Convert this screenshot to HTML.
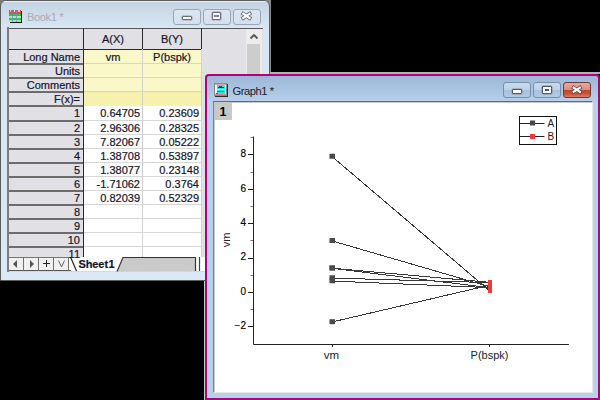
<!DOCTYPE html>
<html><head><meta charset="utf-8">
<style>
*{margin:0;padding:0;box-sizing:border-box}
html,body{width:600px;height:400px;overflow:hidden;background:#000;font-family:"Liberation Sans",sans-serif;position:relative}
div{position:absolute}
.ttl{font-size:11.2px;letter-spacing:-0.45px;white-space:nowrap;line-height:13px}
.wbtn{height:16px;width:28px;border:1px solid #8a98ae;border-radius:3px}
.t{font-size:11px;color:#14142a;line-height:14px;white-space:nowrap;-webkit-text-stroke:0.2px #14142a}
.r{text-align:right}
.c{text-align:center}
</style></head><body>

<div style="left:0;top:0;width:6px;height:6px;background:#7c7c7c"></div>
<div style="left:264px;top:0;width:7px;height:6px;background:#8a8a8a"></div>
<div style="left:270px;top:3px;width:1px;height:278px;background:#8a8a8a"></div>
<div style="left:0;top:0;width:270px;height:281px;border:1px solid #5c5c5c;border-radius:6px 6px 0 0;background:linear-gradient(#c4d3e3 0px,#cddcea 12px,#d8e6f3 27px,#dbe8f5 100%);overflow:hidden">
<div style="left:0;top:0;width:270px;height:1px;background:#e9eff6"></div>
</div>
<svg style="position:absolute;left:0;top:0" width="30" height="30" shape-rendering="crispEdges"><rect x="10" y="11" width="12" height="12" fill="#111"/><rect x="9" y="10" width="12" height="12" fill="#50e070"/><rect x="9" y="10" width="12" height="3" fill="#f04848"/><rect x="10" y="10" width="1" height="2" fill="#ffb0b0"/><rect x="14" y="10" width="1" height="2" fill="#ffffff"/><rect x="18" y="10" width="2" height="2" fill="#ffc0c0"/><rect x="9" y="13" width="12" height="1" fill="#6a6ad0"/><rect x="9" y="14" width="12" height="1" fill="#10dd30"/><rect x="9" y="15" width="12" height="1" fill="#7a80d0"/><rect x="9" y="16" width="12" height="2" fill="#a0f0a8"/><rect x="9" y="18" width="12" height="2" fill="#30c850"/><rect x="9" y="20" width="12" height="2" fill="#90f098"/><rect x="12" y="10" width="1" height="12" fill="#8080e0" fill-opacity="0.65"/><rect x="16" y="10" width="1" height="12" fill="#8080e0" fill-opacity="0.65"/></svg>
<div class="ttl" style="left:27px;top:11px;color:#a9abb2">Book1 *</div>
<div class="wbtn" style="left:173px;top:9px;background:linear-gradient(#dce6f1,#d3e0ed);border-color:#98a6ba"></div>
<div class="wbtn" style="left:203px;top:9px;background:linear-gradient(#dce6f1,#d3e0ed);border-color:#98a6ba"></div>
<div class="wbtn" style="left:233px;top:9px;background:linear-gradient(#dce6f1,#d3e0ed);border-color:#98a6ba"></div>
<div style="left:182px;top:16px;width:10px;height:4px;background:#fff;border:1px solid #6a6e78;border-radius:1px;box-shadow:0 0 0 0.5px #9aa0aa"></div>
<div style="left:212px;top:12px;width:9px;height:8px;background:#fff;border:1px solid #6a6e78;border-radius:1px;box-shadow:0 0 0 0.5px #9aa0aa"><div style="left:1px;top:2px;width:5px;height:2px;background:#7a8090"></div></div>
<svg style="position:absolute;left:0;top:0" width="600" height="400"><path d="M243.20000000000002 13.7 L249.6 18.1 M249.6 13.7 L243.20000000000002 18.1" stroke="#6a6e78" stroke-width="3.8" stroke-linecap="square" fill="none"/><path d="M243.20000000000002 13.7 L249.6 18.1 M249.6 13.7 L243.20000000000002 18.1" stroke="#fff" stroke-width="2.1" stroke-linecap="square" fill="none"/></svg>
<div style="left:7px;top:27px;width:256px;height:245px;background:#e1e0e5;overflow:hidden">
<div style="left:0;top:0;width:256px;height:1px;background:#dce9f5"></div>
<div style="left:0;top:1px;width:256px;height:1px;background:#555"></div>
<div style="left:0;top:0;width:2px;height:245px;background:#7c7c7c"></div>
<div style="left:77px;top:23px;width:118px;height:41px;background:#faf7c9;"></div>
<div style="left:77px;top:65px;width:118px;height:13px;background:#f6f1ad;"></div>
<div style="left:77px;top:79px;width:118px;height:151px;background:#ffffff;"></div>
<div style="left:2px;top:36px;width:74px;height:2px;background:#6c6c6c;"></div>
<div style="left:77px;top:36px;width:118px;height:1px;background:#d6d6d6;"></div>
<div style="left:2px;top:50px;width:74px;height:2px;background:#6c6c6c;"></div>
<div style="left:77px;top:50px;width:118px;height:1px;background:#d6d6d6;"></div>
<div style="left:2px;top:64px;width:74px;height:2px;background:#6c6c6c;"></div>
<div style="left:77px;top:64px;width:118px;height:1px;background:#d6d6d6;"></div>
<div style="left:2px;top:78px;width:74px;height:2px;background:#6c6c6c;"></div>
<div style="left:77px;top:78px;width:118px;height:1px;background:#ececec;"></div>
<div style="left:2px;top:93px;width:74px;height:2px;background:#6c6c6c;"></div>
<div style="left:77px;top:93px;width:118px;height:1px;background:#d6d6d6;"></div>
<div style="left:2px;top:107px;width:74px;height:2px;background:#6c6c6c;"></div>
<div style="left:77px;top:107px;width:118px;height:1px;background:#d6d6d6;"></div>
<div style="left:2px;top:121px;width:74px;height:2px;background:#6c6c6c;"></div>
<div style="left:77px;top:121px;width:118px;height:1px;background:#d6d6d6;"></div>
<div style="left:2px;top:135px;width:74px;height:2px;background:#6c6c6c;"></div>
<div style="left:77px;top:135px;width:118px;height:1px;background:#d6d6d6;"></div>
<div style="left:2px;top:149px;width:74px;height:2px;background:#6c6c6c;"></div>
<div style="left:77px;top:149px;width:118px;height:1px;background:#d6d6d6;"></div>
<div style="left:2px;top:163px;width:74px;height:2px;background:#6c6c6c;"></div>
<div style="left:77px;top:163px;width:118px;height:1px;background:#d6d6d6;"></div>
<div style="left:2px;top:177px;width:74px;height:2px;background:#6c6c6c;"></div>
<div style="left:77px;top:177px;width:118px;height:1px;background:#d6d6d6;"></div>
<div style="left:2px;top:191px;width:74px;height:2px;background:#6c6c6c;"></div>
<div style="left:77px;top:191px;width:118px;height:1px;background:#d6d6d6;"></div>
<div style="left:2px;top:205px;width:74px;height:2px;background:#6c6c6c;"></div>
<div style="left:77px;top:205px;width:118px;height:1px;background:#d6d6d6;"></div>
<div style="left:2px;top:219px;width:74px;height:2px;background:#6c6c6c;"></div>
<div style="left:77px;top:219px;width:118px;height:1px;background:#d6d6d6;"></div>
<div style="left:2px;top:22px;width:193px;height:1px;background:#2a2a2a;"></div>
<div style="left:76px;top:1px;width:1px;height:229px;background:#2a2a2a;"></div>
<div style="left:135px;top:1px;width:1px;height:21px;background:#2a2a2a;"></div>
<div style="left:194px;top:1px;width:1px;height:21px;background:#2a2a2a;"></div>
<div style="left:135px;top:22px;width:1px;height:208px;background:#d0d0d0;"></div>
<div style="left:194px;top:22px;width:1px;height:208px;background:#d0d0d0;"></div>
<div style="left:239px;top:2px;width:16px;height:228px;background:#ececec;"></div>
<div style="left:240px;top:17px;width:13px;height:213px;background:#cdcdcd;"></div>
<svg style="position:absolute;left:0;top:0" width="270" height="100"><path d="M243.5 11.5 L247 8 L250.5 11.5" stroke="#555" stroke-width="1.8" fill="none"/></svg>
<div style="left:2px;top:230px;width:253px;height:15px;background:#ffffff;"></div>
<div style="left:2px;top:230px;width:62px;height:1px;background:#777;"></div>
<div style="left:2px;top:243px;width:62px;height:1px;background:#555;"></div>
<div style="left:2px;top:244px;width:253px;height:1px;background:#d8d8d8;"></div>
<div style="left:2px;top:231px;width:14px;height:12px;background:#f0f0f0;"></div>
<div style="left:16px;top:230px;width:1px;height:14px;background:#707070;"></div>
<div style="left:17px;top:231px;width:14px;height:12px;background:#f0f0f0;"></div>
<div style="left:31px;top:230px;width:1px;height:14px;background:#707070;"></div>
<div style="left:32px;top:231px;width:14px;height:12px;background:#f0f0f0;"></div>
<div style="left:46px;top:230px;width:1px;height:14px;background:#707070;"></div>
<div style="left:47px;top:231px;width:14px;height:12px;background:#f0f0f0;"></div>
<div style="left:61px;top:230px;width:1px;height:14px;background:#707070;"></div>
</div>
<div class="t c" style="left:84px;top:32px;width:58px;">A(X)</div>
<div class="t c" style="left:143px;top:32px;width:58px;">B(Y)</div>
<div class="t r" style="left:9px;top:49.5px;width:71px;">Long Name</div>
<div class="t r" style="left:9px;top:64px;width:71px;">Units</div>
<div class="t r" style="left:9px;top:78px;width:71px;">Comments</div>
<div class="t r" style="left:9px;top:92px;width:71px;">F(x)=</div>
<div class="t r" style="left:9px;top:106px;width:71px;">1</div>
<div class="t r" style="left:9px;top:121px;width:71px;">2</div>
<div class="t r" style="left:9px;top:135px;width:71px;">3</div>
<div class="t r" style="left:9px;top:149px;width:71px;">4</div>
<div class="t r" style="left:9px;top:163px;width:71px;">5</div>
<div class="t r" style="left:9px;top:177px;width:71px;">6</div>
<div class="t r" style="left:9px;top:191px;width:71px;">7</div>
<div class="t r" style="left:9px;top:205px;width:71px;">8</div>
<div class="t r" style="left:9px;top:219px;width:71px;">9</div>
<div class="t r" style="left:9px;top:233px;width:71px;">10</div>
<div class="t r" style="left:9px;top:247px;width:71px;">11</div>
<div class="t c" style="left:84px;top:49.5px;width:58px;">vm</div>
<div class="t c" style="left:143px;top:49.5px;width:58px;">P(bspk)</div>
<div class="t r" style="left:84px;top:106px;width:56px;">0.64705</div>
<div class="t r" style="left:143px;top:106px;width:56px;">0.23609</div>
<div class="t r" style="left:84px;top:121px;width:56px;">2.96306</div>
<div class="t r" style="left:143px;top:121px;width:56px;">0.28325</div>
<div class="t r" style="left:84px;top:135px;width:56px;">7.82067</div>
<div class="t r" style="left:143px;top:135px;width:56px;">0.05222</div>
<div class="t r" style="left:84px;top:149px;width:56px;">1.38708</div>
<div class="t r" style="left:143px;top:149px;width:56px;">0.53897</div>
<div class="t r" style="left:84px;top:163px;width:56px;">1.38077</div>
<div class="t r" style="left:143px;top:163px;width:56px;">0.23148</div>
<div class="t r" style="left:84px;top:177px;width:56px;">-1.71062</div>
<div class="t r" style="left:143px;top:177px;width:56px;">0.3764</div>
<div class="t r" style="left:84px;top:191px;width:56px;">0.82039</div>
<div class="t r" style="left:143px;top:191px;width:56px;">0.52329</div>
<div style="left:13px;top:260px;width:0;height:0;border-top:4px solid transparent;border-bottom:4px solid transparent;border-right:4px solid #555"></div>
<div style="left:30px;top:260px;width:0;height:0;border-top:4px solid transparent;border-bottom:4px solid transparent;border-left:4px solid #555"></div>
<div style="left:43px;top:263px;width:7px;height:1px;background:#222"></div><div style="left:46px;top:260px;width:1px;height:7px;background:#222"></div>
<svg style="position:absolute;left:0;top:0" width="100" height="300"><path d="M58.5 260.5 L61.5 267 L64.5 260.5" stroke="#666" stroke-width="1" fill="none"/></svg>
<svg style="position:absolute;left:0;top:0" width="270" height="281"><path d="M70.5 257 L76.5 271" stroke="#222" stroke-width="1.2" fill="none"/><path d="M117 271.5 L123 257.5 L195.5 257.5 L195.5 271" stroke="#333" stroke-width="1.2" fill="#cacaca"/><path d="M199.5 257 L199.5 271" stroke="#444" stroke-width="1.2"/></svg>
<div class="t" style="left:78.5px;top:257px;font-weight:bold;font-size:11px;letter-spacing:-0.1px">Sheet</div>
<div class="t" style="left:108.5px;top:257px;font-weight:bold;font-size:11px">1</div>
<div style="left:270px;top:72px;width:330px;height:2px;background:#b4b4b4"></div>
<div style="left:204px;top:281px;width:1px;height:119px;background:#c4ccc8"></div>
<div style="left:205px;top:74px;width:395px;height:326px;background:#b4007e;border-radius:4px 4px 0 0"></div>
<div style="left:207px;top:76px;width:391px;height:322px;background:linear-gradient(#9cb8d6 0px,#a8c3e0 12px,#b8d0ea 26px,#b8d0ea 100%);border-radius:2px 2px 0 0"></div>
<svg style="position:absolute;left:0;top:0" width="240" height="100" shape-rendering="crispEdges"><rect x="215" y="84" width="13" height="13" fill="#2a2a2a"/><rect x="214" y="83" width="13" height="13" fill="#8a8a8a"/><rect x="215" y="84" width="11" height="11" fill="#f4f0f0"/><rect x="215" y="84" width="11" height="1" fill="#f0a0a0"/><rect x="215" y="94" width="11" height="1" fill="#f08080"/><rect x="217" y="85" width="8" height="9" fill="#22e8e8"/><rect x="217" y="89" width="8" height="1" fill="#d0f4f4"/><rect x="218" y="87" width="6" height="1" fill="#203040"/><rect x="219" y="86" width="3" height="1" fill="#405060"/><rect x="217" y="91" width="7" height="1" fill="#4060e0"/><rect x="216" y="93" width="2" height="1" fill="#e02020"/></svg>
<div class="ttl" style="left:232.5px;top:85px;color:#1a2030">Graph1 *</div>
<div class="wbtn" style="left:503px;top:82px;background:linear-gradient(#c8dbef 0,#bcd2ea 50%,#a7c1dd 51%,#b2cbe5 100%);border-color:#7b8ca8"></div>
<div class="wbtn" style="left:533px;top:82px;background:linear-gradient(#c8dbef 0,#bcd2ea 50%,#a7c1dd 51%,#b2cbe5 100%);border-color:#7b8ca8"></div>
<div class="wbtn" style="left:563px;top:82px;background:linear-gradient(#eaa898 0,#e0907e 46%,#c4472a 52%,#c85236 75%,#dc7c62 100%);border-color:#6a3a44"></div>
<div style="left:512px;top:89px;width:10px;height:5px;background:#fff;border:1px solid #4e5868;border-radius:1px;box-shadow:0 0 0 0.5px #8a90a0"></div>
<div style="left:542px;top:86px;width:10px;height:8px;background:#fff;border:1px solid #4e5868;border-radius:1px;box-shadow:0 0 0 0.5px #8a90a0"><div style="left:2px;top:2px;width:4px;height:2px;background:#4a5a78"></div></div>
<svg style="position:absolute;left:0;top:0" width="600" height="400"><path d="M573.6999999999999 87.7 L579.9 91.89999999999999 M579.9 87.7 L573.6999999999999 91.89999999999999" stroke="#5a4a50" stroke-width="3.8" stroke-linecap="square" fill="none"/><path d="M573.6999999999999 87.7 L579.9 91.89999999999999 M579.9 87.7 L573.6999999999999 91.89999999999999" stroke="#fff" stroke-width="2.1" stroke-linecap="square" fill="none"/></svg>
<div style="left:213px;top:101px;width:380px;height:292px;background:#fff;border-top:1px solid #6a6a6a;border-left:1px solid #808080;border-right:1px solid #e8e8e8;border-bottom:1px solid #e8e8e8"></div>
<div style="left:214px;top:102px;width:378px;height:1px;background:#c8c8c8"></div>
<div style="left:214px;top:102px;width:1px;height:290px;background:#c8c8c8"></div>
<div style="left:215px;top:103px;width:17px;height:17px;background:#c8c8c8"></div>
<div style="left:219.5px;top:105px;font-size:12.5px;font-weight:bold;color:#000">1</div>
<svg style="position:absolute;left:0;top:0" width="600" height="400" shape-rendering="auto"><path d="M253.5 136.5 V344.5 H569" stroke="#222" stroke-width="1" fill="none"/><path d="M248 326.5 H253" stroke="#222" stroke-width="1"/><path d="M250.5 309.5 H253" stroke="#777" stroke-width="1"/><path d="M248 292.5 H253" stroke="#222" stroke-width="1"/><path d="M250.5 275.5 H253" stroke="#777" stroke-width="1"/><path d="M248 258.5 H253" stroke="#222" stroke-width="1"/><path d="M250.5 240.5 H253" stroke="#777" stroke-width="1"/><path d="M248 223.5 H253" stroke="#222" stroke-width="1"/><path d="M250.5 206.5 H253" stroke="#777" stroke-width="1"/><path d="M248 189.5 H253" stroke="#222" stroke-width="1"/><path d="M250.5 172.5 H253" stroke="#777" stroke-width="1"/><path d="M248 154.5 H253" stroke="#222" stroke-width="1"/><path d="M250.5 137.5 H253" stroke="#777" stroke-width="1"/><path d="M332.5 345 V347 M489.5 345 V347" stroke="#222" stroke-width="1"/><path d="M332 281.07 L489.7 287.60" stroke="#383838" stroke-width="1" fill="none" shape-rendering="crispEdges"/><path d="M332 240.86 L489.7 286.78" stroke="#383838" stroke-width="1" fill="none" shape-rendering="crispEdges"/><path d="M332 156.53 L489.7 290.79" stroke="#383838" stroke-width="1" fill="none" shape-rendering="crispEdges"/><path d="M332 268.22 L489.7 282.34" stroke="#383838" stroke-width="1" fill="none" shape-rendering="crispEdges"/><path d="M332 268.33 L489.7 287.68" stroke="#383838" stroke-width="1" fill="none" shape-rendering="crispEdges"/><path d="M332 322.00 L489.7 285.17" stroke="#383838" stroke-width="1" fill="none" shape-rendering="crispEdges"/><path d="M332 278.06 L489.7 282.62" stroke="#383838" stroke-width="1" fill="none" shape-rendering="crispEdges"/><rect x="329.5" y="278.27" width="5.5" height="5" fill="#4a4a4a"/><rect x="329.5" y="238.06" width="5.5" height="5" fill="#4a4a4a"/><rect x="329.5" y="153.73" width="5.5" height="5" fill="#4a4a4a"/><rect x="329.5" y="265.42" width="5.5" height="5" fill="#4a4a4a"/><rect x="329.5" y="265.53" width="5.5" height="5" fill="#4a4a4a"/><rect x="329.5" y="319.20" width="5.5" height="5" fill="#4a4a4a"/><rect x="329.5" y="275.26" width="5.5" height="5" fill="#4a4a4a"/><rect x="487.5" y="285.10" width="4.5" height="5.2" fill="#ee3a3a" shape-rendering="crispEdges"/><rect x="487.5" y="284.28" width="4.5" height="5.2" fill="#ee3a3a" shape-rendering="crispEdges"/><rect x="487.5" y="288.29" width="4.5" height="5.2" fill="#ee3a3a" shape-rendering="crispEdges"/><rect x="487.5" y="279.84" width="4.5" height="5.2" fill="#ee3a3a" shape-rendering="crispEdges"/><rect x="487.5" y="285.18" width="4.5" height="5.2" fill="#ee3a3a" shape-rendering="crispEdges"/><rect x="487.5" y="282.67" width="4.5" height="5.2" fill="#ee3a3a" shape-rendering="crispEdges"/><rect x="487.5" y="280.12" width="4.5" height="5.2" fill="#ee3a3a" shape-rendering="crispEdges"/><text x="246" y="157.1" font-size="10" text-anchor="end" fill="#000" stroke="#000" stroke-width="0.15" font-family="Liberation Sans">8</text><text x="246" y="191.5" font-size="10" text-anchor="end" fill="#000" stroke="#000" stroke-width="0.15" font-family="Liberation Sans">6</text><text x="246" y="225.9" font-size="10" text-anchor="end" fill="#000" stroke="#000" stroke-width="0.15" font-family="Liberation Sans">4</text><text x="246" y="260.3" font-size="10" text-anchor="end" fill="#000" stroke="#000" stroke-width="0.15" font-family="Liberation Sans">2</text><text x="246" y="294.7" font-size="10" text-anchor="end" fill="#000" stroke="#000" stroke-width="0.15" font-family="Liberation Sans">0</text><text x="246" y="329.1" font-size="10" text-anchor="end" fill="#000" stroke="#000" stroke-width="0.15" font-family="Liberation Sans">&#x2212;2</text><text x="331.5" y="358.5" font-size="11.5" text-anchor="middle" fill="#222" font-family="Liberation Sans">vm</text><text x="489.5" y="358.5" font-size="11" text-anchor="middle" fill="#222" font-family="Liberation Sans">P(bspk)</text><text x="0" y="0" font-size="11" text-anchor="middle" fill="#222" font-family="Liberation Sans" transform="translate(230 240) rotate(-90)">vm</text><rect x="519.5" y="116.5" width="37" height="28" fill="#fff" stroke="#111" stroke-width="1"/><path d="M520 123.5 H544.5 M520 136.5 H544.5" stroke="#222" stroke-width="1"/><rect x="530" y="120.5" width="5" height="5" fill="#4a4a4a"/><rect x="530" y="134" width="5" height="5" fill="#ee3a3a"/><text x="547.5" y="126.5" font-size="10" fill="#222" font-family="Liberation Sans">A</text><text x="547.5" y="139.5" font-size="10" fill="#222" font-family="Liberation Sans">B</text></svg>
</body></html>
